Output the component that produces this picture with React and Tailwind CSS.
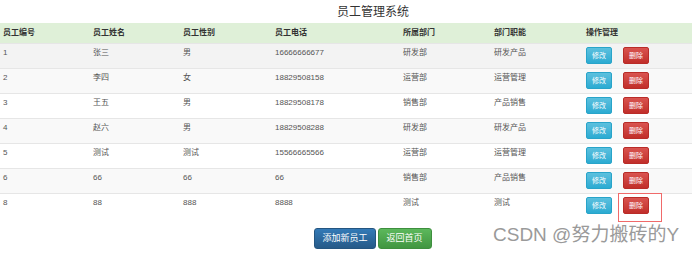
import React from 'react';

const cols = 'grid grid-cols-[90px_90px_92px_128px_91px_92px_109px]';

const staff = [
  { id: '1', name: '张三', sex: '男', phone: '16666666677', dept: '研发部', duty: '研发产品', bg: 'bg-[#f3f3f3]' },
  { id: '2', name: '李四', sex: '女', phone: '18829508158', dept: '运营部', duty: '运营管理', bg: 'bg-[#f9f9f9]' },
  { id: '3', name: '王五', sex: '男', phone: '18829508178', dept: '销售部', duty: '产品销售', bg: 'bg-white' },
  { id: '4', name: '赵六', sex: '男', phone: '18829508288', dept: '研发部', duty: '研发产品', bg: 'bg-[#f9f9f9]' },
  { id: '5', name: '测试', sex: '测试', phone: '15566665566', dept: '运营部', duty: '运营管理', bg: 'bg-white' },
  { id: '6', name: '66', sex: '66', phone: '66', dept: '销售部', duty: '产品销售', bg: 'bg-[#f9f9f9]' },
  { id: '8', name: '88', sex: '888', phone: '8888', dept: '测试', duty: '测试', bg: 'bg-white' },
];

const headers = ['员工编号', '员工姓名', '员工性别', '员工电话', '所属部门', '部门职能', '操作管理'];

const App = () => {
  return (
    <div
      className="relative w-[692px] h-[254px] bg-white overflow-hidden"
      style={{ fontFamily: '"Liberation Sans", "Noto Sans CJK SC", sans-serif' }}
    >
      <div className="h-[23px] pl-[54px] flex items-center justify-center text-[12px] text-[#333]">
        员工管理系统
      </div>

      <div className="text-[8px] leading-[12px]">
        <div className={`${cols} h-[20px] items-center bg-[#dff0d8] font-bold text-[#333]`}>
          {headers.map((h) => (
            <div key={h} className="pl-[3px]">{h}</div>
          ))}
        </div>
        {staff.map((s) => (
          <div key={s.id} className={`${cols} h-[25px] border-t border-[#e6e6e6] text-[#555] ${s.bg}`}>
            <div className="pl-[3px] pt-[3px]">{s.id}</div>
            <div className="pl-[3px] pt-[3px]">{s.name}</div>
            <div className="pl-[3px] pt-[3px]">{s.sex}</div>
            <div className="pl-[3px] pt-[3px]">{s.phone}</div>
            <div className="pl-[3px] pt-[3px]">{s.dept}</div>
            <div className="pl-[3px] pt-[3px]">{s.duty}</div>
            <div className="pl-[3px] pt-[3px] flex gap-[11px]">
              <button className="w-[26px] h-[17px] rounded-[2px] border border-[#28a4c9] bg-linear-to-b from-[#5bc0de] to-[#2aabd2] text-white text-[7px] leading-none">
                修改
              </button>
              <button className="w-[26px] h-[17px] rounded-[2px] border border-[#b92c28] bg-linear-to-b from-[#d9534f] to-[#c12e2a] text-white text-[7px] leading-none">
                删除
              </button>
            </div>
          </div>
        ))}
      </div>

      <div className="mt-[10px] pl-[54px] flex justify-center gap-[2px]">
        <button className="h-[21px] px-[7px] rounded-[3px] border border-[#245580] bg-linear-to-b from-[#337ab7] to-[#265a88] text-white text-[9px] leading-none">
          添加新员工
        </button>
        <button className="h-[21px] px-[8px] rounded-[3px] border border-[#3e8f3e] bg-linear-to-b from-[#5cb85c] to-[#419641] text-white text-[9px] leading-none">
          返回首页
        </button>
      </div>

      <div className="absolute left-[618px] top-[193px] w-[44px] h-[29px] border border-[#f06a6a]" />

      <div className="absolute left-[493px] top-[225px] text-[19px] leading-none text-[#9a9a9a] whitespace-nowrap">
        CSDN @努力搬砖的Y
      </div>
    </div>
  );
};

export default App;
